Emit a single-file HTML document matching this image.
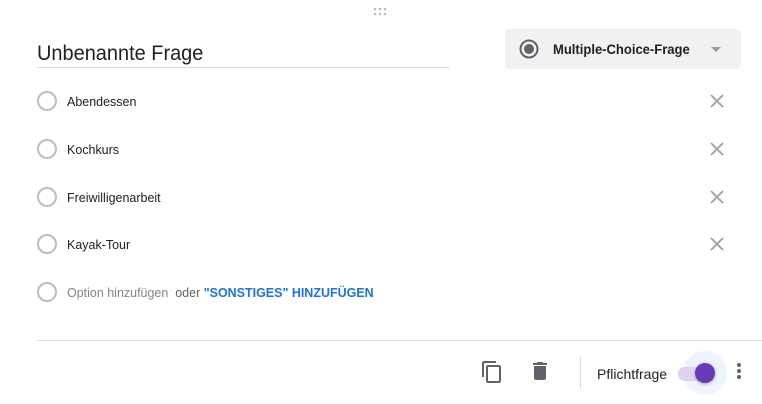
<!DOCTYPE html>
<html><head><meta charset="utf-8"><style>
body{margin:0;width:762px;height:404px;background:#fff;position:relative;overflow:hidden;font-family:"Liberation Sans",sans-serif;}
.a{position:absolute;white-space:nowrap;}
.opt{font-size:13px;color:#202124;transform:scaleX(.96);transform-origin:left;}
.c{position:absolute;left:37px;border:2px solid #bdbdbd;border-radius:50%;box-sizing:border-box;width:20px;height:20px;}
</style></head><body>
<svg class="a" style="left:372px;top:6px" width="16" height="12"><g fill="#bdbdbd"><circle cx="3" cy="3" r="1.3"/><circle cx="8" cy="3" r="1.3"/><circle cx="13" cy="3" r="1.3"/><circle cx="3" cy="8" r="1.3"/><circle cx="8" cy="8" r="1.3"/><circle cx="13" cy="8" r="1.3"/></g></svg>
<div class="a" style="left:37px;top:42px;font-size:21px;color:#202124;transform:scaleX(.95);transform-origin:left">Unbenannte Frage</div>
<div class="a" style="left:37px;top:67px;width:412px;height:1px;background:#dadce0"></div>
<div class="a" style="left:505px;top:29px;width:236px;height:40px;background:#f1f1f1;border-radius:4px"></div>
<svg class="a" style="left:518px;top:38px" width="22" height="22"><circle cx="11" cy="11" r="8.5" fill="none" stroke="#5f6368" stroke-width="2"/><circle cx="11" cy="11" r="5" fill="#5f6368"/></svg>
<div class="a" style="left:553px;top:41px;font-size:14px;font-weight:bold;color:#202124;transform:scaleX(.93);transform-origin:left">Multiple-Choice-Frage</div>
<div class="a" style="left:711px;top:47px;width:0;height:0;border-left:5px solid transparent;border-right:5px solid transparent;border-top:5px solid #9e9e9e"></div>

<div class="c" style="top:91px"></div><div class="a opt" style="left:67px;top:94px">Abendessen</div>
<div class="c" style="top:139px"></div><div class="a opt" style="left:67px;top:142px">Kochkurs</div>
<div class="c" style="top:187px"></div><div class="a opt" style="left:67px;top:190px">Freiwilligenarbeit</div>
<div class="c" style="top:234px"></div><div class="a opt" style="left:67px;top:237px">Kayak-Tour</div>
<div class="c" style="top:282px"></div>
<div class="a" style="left:67px;top:285px;font-size:13px;color:#80868b;transform:scaleX(.96);transform-origin:left">Option hinzufügen <span style="color:#5f6368">&nbsp;oder</span> <span style="color:#1a73e8;font-weight:bold">"SONSTIGES" HINZUFÜGEN</span></div>
<svg class="a" style="left:709px;top:93px" width="16" height="170"><g stroke="#9e9e9e" stroke-width="1.8"><path d="M2 2L14 14M14 2L2 14"/><path d="M2 50L14 62M14 50L2 62"/><path d="M2 98L14 110M14 98L2 110"/><path d="M2 145L14 157M14 145L2 157"/></g></svg>

<div class="a" style="left:37px;top:340px;width:725px;height:1px;background:#e0e0e0"></div>
<svg class="a" style="left:480px;top:360px" width="24" height="24"><path d="M16 1H4c-1.1 0-2 .9-2 2v14h2V3h12V1zm3 4H8c-1.1 0-2 .9-2 2v14c0 1.1.9 2 2 2h11c1.1 0 2-.9 2-2V7c0-1.1-.9-2-2-2zm0 16H8V7h11v14z" fill="#5f6368"/></svg>
<svg class="a" style="left:528px;top:359px" width="24" height="24"><path d="M6 19c0 1.1.9 2 2 2h8c1.1 0 2-.9 2-2V7H6v12zM19 4h-3.5l-1-1h-5l-1 1H5v2h14V4z" fill="#5f6368"/></svg>
<div class="a" style="left:580px;top:357px;width:1px;height:32px;background:#dadce0"></div>
<div class="a" style="left:597px;top:366px;font-size:14px;color:#202124">Pflichtfrage</div>
<div class="a" style="left:683px;top:351px;width:44px;height:44px;border-radius:50%;background:#eef3fc"></div>
<div class="a" style="left:678px;top:367px;width:32px;height:14px;border-radius:7px;background:#ddd3ee"></div>
<div class="a" style="left:695px;top:363px;width:20px;height:20px;border-radius:50%;background:#673ab7;box-shadow:0 1px 3px rgba(0,0,0,.3)"></div>
<svg class="a" style="left:735px;top:362px" width="8" height="20"><g fill="#5f6368"><circle cx="4" cy="3" r="2"/><circle cx="4" cy="9" r="2"/><circle cx="4" cy="15" r="2"/></g></svg>
</body></html>
